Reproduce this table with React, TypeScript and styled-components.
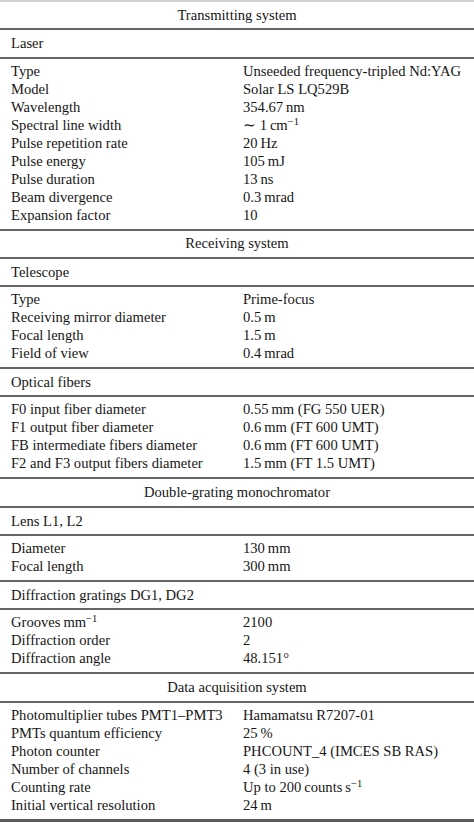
import React from "react";
import styled, { createGlobalStyle } from "styled-components";

const Global = createGlobalStyle`
  html, body { margin: 0; padding: 0; background: #ffffff; }
  body { font-family: "Liberation Serif", "Times New Roman", serif; color: #161616; }
`;

const Table = styled.div`
  width: 474px;
  display: flex;
  flex-direction: column;
  font-size: 14.6px;
  border-top: 2.5px solid #d2d2d2;
  border-bottom: 3px solid #5a5a5a;
`;

const Header = styled.div<{ $center?: boolean }>`
  height: 26.3px;
  display: flex;
  align-items: center;
  justify-content: ${(p) => (p.$center ? "center" : "flex-start")};
  padding-left: ${(p) => (p.$center ? "0" : "11px")};
  border-bottom: 2px solid #666666;
  line-height: 1;
`;

const Block = styled.div<{ $last?: boolean }>`
  padding: 3px 0 5px;
  border-bottom: ${(p) => (p.$last ? "none" : "2px solid #666666")};
`;

const Row = styled.div`
  display: grid;
  grid-template-columns: 232px 1fr;
  padding-left: 11px;
  height: 18px;
  line-height: 18px;
  white-space: nowrap;
`;

const Sup = styled.sup`
  font-size: 0.72em;
  line-height: 0;
  vertical-align: 0.5em;
`;

const T = "\u2009";

type Item = [React.ReactNode, React.ReactNode];
type Section =
  | { kind: "title"; text: string }
  | { kind: "sub"; text: string }
  | { kind: "rows"; rows: Item[] };

const data: Section[] = [
  { kind: "title", text: "Transmitting system" },
  { kind: "sub", text: "Laser" },
  {
    kind: "rows",
    rows: [
      ["Type", "Unseeded frequency-tripled Nd:YAG"],
      ["Model", "Solar LS LQ529B"],
      ["Wavelength", `354.67${T}nm`],
      [
        "Spectral line width",
        <>
          ∼ 1{T}cm<Sup>−1</Sup>
        </>,
      ],
      ["Pulse repetition rate", `20${T}Hz`],
      ["Pulse energy", `105${T}mJ`],
      ["Pulse duration", `13${T}ns`],
      ["Beam divergence", `0.3${T}mrad`],
      ["Expansion factor", "10"],
    ],
  },
  { kind: "title", text: "Receiving system" },
  { kind: "sub", text: "Telescope" },
  {
    kind: "rows",
    rows: [
      ["Type", "Prime-focus"],
      ["Receiving mirror diameter", `0.5${T}m`],
      ["Focal length", `1.5${T}m`],
      ["Field of view", `0.4${T}mrad`],
    ],
  },
  { kind: "sub", text: "Optical fibers" },
  {
    kind: "rows",
    rows: [
      ["F0 input fiber diameter", `0.55${T}mm (FG 550 UER)`],
      ["F1 output fiber diameter", `0.6${T}mm (FT 600 UMT)`],
      ["FB intermediate fibers diameter", `0.6${T}mm (FT 600 UMT)`],
      ["F2 and F3 output fibers diameter", `1.5${T}mm (FT 1.5 UMT)`],
    ],
  },
  { kind: "title", text: "Double-grating monochromator" },
  { kind: "sub", text: "Lens L1, L2" },
  {
    kind: "rows",
    rows: [
      ["Diameter", `130${T}mm`],
      ["Focal length", `300${T}mm`],
    ],
  },
  { kind: "sub", text: "Diffraction gratings DG1, DG2" },
  {
    kind: "rows",
    rows: [
      [
        <>
          Grooves{T}mm<Sup>−1</Sup>
        </>,
        "2100",
      ],
      ["Diffraction order", "2"],
      ["Diffraction angle", "48.151°"],
    ],
  },
  { kind: "title", text: "Data acquisition system" },
  {
    kind: "rows",
    rows: [
      ["Photomultiplier tubes PMT1–PMT3", "Hamamatsu R7207-01"],
      ["PMTs quantum efficiency", `25${T}%`],
      ["Photon counter", "PHCOUNT_4 (IMCES SB RAS)"],
      ["Number of channels", "4 (3 in use)"],
      [
        "Counting rate",
        <>
          Up to 200{T}counts{T}s<Sup>−1</Sup>
        </>,
      ],
      ["Initial vertical resolution", `24${T}m`],
    ],
  },
];

export default function App() {
  return (
    <>
      <Global />
      <Table>
        {data.map((s, i) => {
          if (s.kind === "title")
            return (
              <Header key={i} $center>
                {s.text}
              </Header>
            );
          if (s.kind === "sub") return <Header key={i}>{s.text}</Header>;
          return (
            <Block key={i} $last={i === data.length - 1}>
              {s.rows.map((r, j) => (
                <Row key={j}>
                  <span>{r[0]}</span>
                  <span>{r[1]}</span>
                </Row>
              ))}
            </Block>
          );
        })}
      </Table>
    </>
  );
}
